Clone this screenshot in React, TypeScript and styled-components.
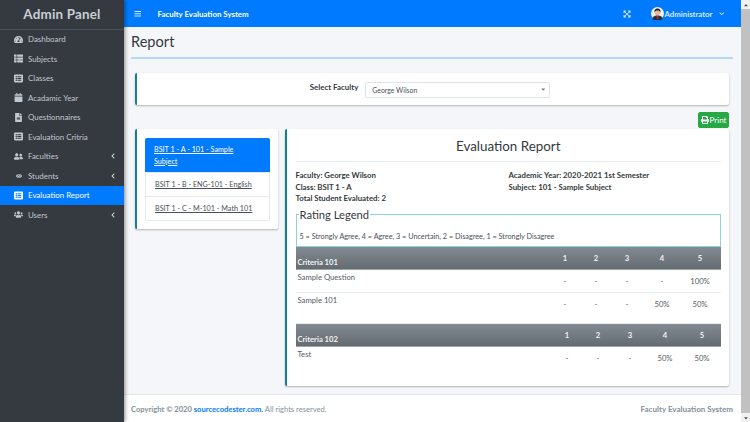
import React from "react";
import styled, { createGlobalStyle } from "styled-components";
import {
  FaTachometerAlt, FaThList, FaListAlt, FaCalendar, FaFileAlt, FaUserFriends, FaUsers, FaEye,
  FaChevronLeft, FaChevronDown, FaBars, FaExpandArrowsAlt, FaPrint, FaCaretDown, FaCaretUp,
} from "react-icons/fa";

const FONT = `"Lato", "Noto Sans", sans-serif`;

const Global = createGlobalStyle`
  html, body { margin: 0; padding: 0; height: 422px; overflow: hidden; background: #f4f6f9; }
  body { font-family: ${FONT}; font-size: 8px; color: #212529; }
  * { box-sizing: border-box; }
`;

const Page = styled.div`display: flex; width: 750px; height: 422px; overflow: hidden;`;

const Sidebar = styled.aside`
  width: 124px; flex: none; background: #343a40; color: #c2c7d0;
  box-shadow: 1px 0 4px rgba(0,0,0,.45); z-index: 2;
`;
const Brand = styled.div`
  height: 29.5px; display: flex; align-items: center; justify-content: center;
  font-size: 13.4px; font-weight: 700; letter-spacing: .2px; color: #c9ced5; border-bottom: 1px solid #4b545c;
`;
const Nav = styled.nav`display: flex; flex-direction: column;`;
const NavItem = styled.div<{ $active?: boolean }>`
  height: 19.5px; display: flex; align-items: center; padding: 0 8px 0 13px; gap: 4px;
  font-size: 7.9px; color: ${(p) => (p.$active ? "#ffffff" : "#c2c7d0")};
  background: ${(p) => (p.$active ? "#007bff" : "transparent")};
`;
const NavIcon = styled.span<{ $small?: boolean }>`
  width: 11px; display: flex; justify-content: center;
  svg { width: auto; height: ${(p) => (p.$small ? 6 : 9)}px; }
`;
const NavLabel = styled.span`flex: 1; white-space: nowrap;`;
const NavArrow = styled(FaChevronLeft)`font-size: 6px; color: #d5d9de;`;

const Main = styled.div`flex: 1; min-width: 0; display: flex; flex-direction: column; height: 422px;`;
const Topbar = styled.header`
  height: 27px; flex: none; background: #007bff; color: #fff; display: flex; align-items: center; padding: 0 17px 0 10px;
`;
const Burger = styled(FaBars)`font-size: 7.5px; color: #dbeaff;`;
const SysTitle = styled.div`margin-left: 16px; font-size: 7.9px; font-weight: 700; flex: 1; white-space: nowrap;`;
const FullIcon = styled(FaExpandArrowsAlt)`font-size: 8px; color: #d6e8ff; margin-right: 20px;`;
const Avatar = styled.svg`width: 13px; height: 13px; flex: none; margin-right: 1px;`;
const UserName = styled.span`font-size: 7.8px; font-weight: 700; color: #d6e8ff;`;
const UserCaret = styled(FaChevronDown)`font-size: 5.5px; color: #d6e8ff; margin-left: 6px;`;

const Content = styled.main`flex: 1; min-height: 0; padding: 0 8px 0 7px; display: flex; flex-direction: column;`;
const PageHead = styled.div`
  height: 32px; flex: none; border-bottom: 2px solid #b3d7ff; padding: 5px 0 0;
  font-size: 14.6px; line-height: 19px; color: #343a40;
`;
const Body = styled.div`padding: 14px 4px 0; display: flex; flex-direction: column;`;
const Card = styled.section`
  background: #fff; border-left: 2.5px solid #17808f; border-radius: 2px;
  box-shadow: 0 1px 2px rgba(0,0,0,.28);
`;
const FilterCard = styled(Card)`
  height: 32px; display: flex; align-items: center; justify-content: center; gap: 7px; padding-right: 6px;
`;
const FilterLabel = styled.label`font-size: 7.9px; font-weight: 700; color: #343a40; padding-bottom: 4px;`;
const Select = styled.div`
  width: 185px; height: 16px; margin-top: 1px; border: 1px solid #dfe3e7; border-radius: 2px; display: flex; align-items: center;
  justify-content: space-between; padding: 0 3px 0 6px; font-size: 6.9px; color: #495057; background: #fff;
`;
const SelectCaret = styled(FaCaretDown)`font-size: 6.5px; color: #777;`;
const PrintRow = styled.div`display: flex; justify-content: flex-end; margin-top: 7px; height: 17px;`;
const PrintButton = styled.button`
  width: 31px; height: 16px; border: 1px solid #28a745; background: #28a745; color: #fff; border-radius: 2px; padding: 0;
  display: flex; align-items: center; justify-content: center; gap: 1px; font: 400 8px ${FONT};
`;
const Columns = styled.div`display: flex; align-items: flex-start; gap: 7px;`;
const SideCard = styled(Card)`width: 143px; flex: none; padding: 9px 8px 8px;`;
const ListGroup = styled.div`
  border: 1px solid #e6e8eb; border-radius: 2px; display: flex; flex-direction: column;
`;
const ListItem = styled.a<{ $active?: boolean }>`
  display: block; padding: 6px 9px 5px; font-size: 7.2px; line-height: 11.7px; text-decoration: underline;
  color: ${(p) => (p.$active ? "#fff" : "#495057")}; background: ${(p) => (p.$active ? "#007bff" : "#fff")};
  margin: ${(p) => (p.$active ? "-1px -1px 0" : "0")};
  border-radius: ${(p) => (p.$active ? "2px 2px 0 0" : "0")};
  & + & { border-top: 1px solid #e6e8eb; }
  min-height: 24px;
`;
const ActiveLine = styled.span`display: block; width: 90px;`;
const ReportCard = styled(Card)`flex: 1; min-width: 0; height: 257px; padding: 0 8px 0 8.5px;`;
const ReportTitle = styled.h2`
  margin: 0; height: 33px; border-bottom: 1px solid #e9ecef; text-align: center; font-size: 13.4px; font-weight: 400;
  line-height: 34px; color: #343a40;
`;
const Info = styled.div`
  display: grid; grid-template-columns: 213px 1fr; margin-top: 8px; font-size: 7.8px; font-weight: 700; line-height: 11.6px; color: #343a40;
`;
const Legend = styled.fieldset`
  margin: 3px 0 0; padding: 0 3px; height: 39px; border: 1px solid #8fd3da; border-radius: 0; min-width: 0;
  display: block; font-size: 7.27px; color: #495057;
`;
const LegendTitle = styled.legend`font-size: 11.2px; line-height: 13px; color: #343a40; padding: 0 1px; margin-left: -1px;`;
const LegendText = styled.div`margin-top: 11px; white-space: nowrap;`;
const Grid = styled.div<{ $cols: string }>`
  display: grid; grid-template-columns: ${(p) => p.$cols};
`;
const HeadRow = styled(Grid)`
  height: 23px; background: linear-gradient(#838a91, #646c72); color: #f2f3f4; font-weight: 700; font-size: 7.6px;
  border-bottom: 1px solid #9aa5ae;
`;
const HeadName = styled.div`align-self: end; padding: 0 0 2px 2px;`;
const HeadNum = styled.div`text-align: center; padding-top: 6px;`;
const Row = styled(Grid)<{ $h: number; $line?: boolean }>`
  height: ${(p) => p.$h}px; font-size: 7.7px; color: #555c63;
  border-bottom: ${(p) => (p.$line ? "1px solid #e9ecef" : "none")};
`;
const Question = styled.div`padding: 2px 0 0 2px;`;
const Val = styled.div`text-align: center; padding-top: 6px;`;

const Footer = styled.footer`
  height: 28px; flex: none; background: #fff; border-top: 1px solid #e3e6ea; display: flex; align-items: center;
  justify-content: space-between; padding: 0 8px 0 7px; font-size: 7.6px; color: #869099;
`;
const FooterStrong = styled.strong`font-weight: 700;`;
const FooterBrand = styled.strong`font-weight: 700; font-size: 8px;`;
const FooterLink = styled.span`font-weight: 700; color: #007bff;`;

const Scrollbar = styled.div`
  width: 9px; flex: none; background: #f1f1f1; display: flex; flex-direction: column; align-items: center; justify-content: space-between;
`;
const Thumb = styled.div`width: 100%; flex: 1; background: #c1c1c1; margin: 0;`;
const ScrollArrow = styled.div`height: 9px; font-size: 6px; color: #505050; display: flex; align-items: center;`;

const menu = [
  [FaTachometerAlt, "Dashboard"],
  [FaThList, "Subjects"],
  [FaListAlt, "Classes"],
  [FaCalendar, "Acadamic Year"],
  [FaFileAlt, "Questionnaires"],
  [FaListAlt, "Evaluation Critria"],
  [FaUserFriends, "Faculties", "arrow"],
  [FaEye, "Students", "arrow"],
  [FaListAlt, "Evaluation Report", "active"],
  [FaUsers, "Users", "arrow"],
] as const;

const cols1 = "1fr 36px 26px 36px 34px 42px";
const cols2 = "1fr 32px 30px 34px 36px 38px";

const Nums = () => <>{[1, 2, 3, 4, 5].map((n) => <HeadNum key={n}>{n}</HeadNum>)}</>;
const Vals = ({ v }: { v: string[] }) => <>{v.map((x, i) => <Val key={i}>{x}</Val>)}</>;

export default function App() {
  return (
    <Page>
      <Global />
      <Sidebar>
        <Brand>Admin Panel</Brand>
        <Nav>
          {menu.map(([Icon, label, flag]) => (
            <NavItem key={label} $active={flag === "active"}>
              <NavIcon $small={label === "Students"}><Icon /></NavIcon>
              <NavLabel>{label}</NavLabel>
              {flag === "arrow" && <NavArrow />}
            </NavItem>
          ))}
        </Nav>
      </Sidebar>
      <Main>
        <Topbar>
          <Burger />
          <SysTitle>Faculty Evaluation System</SysTitle>
          <FullIcon />
          <Avatar viewBox="0 0 26 26">
            <circle cx="13" cy="13" r="13" fill="#eef0f2" />
            <path d="M3 24c1-6 5-7 10-7s9 1 10 7a13 13 0 0 1-20 0z" fill="#27303f" />
            <path d="M11 17h4l-1 7h-2z" fill="#c0392b" />
            <circle cx="13" cy="11" r="5.5" fill="#e8b99a" />
            <path d="M7 11c-1-6 3-8 6-8s7 2 6 8c-1-3-3-4-6-4s-5 1-6 4z" fill="#1d1d22" />
          </Avatar>
          <UserName>Administrator</UserName>
          <UserCaret />
        </Topbar>
        <Content>
          <PageHead>Report</PageHead>
          <Body>
            <FilterCard>
              <FilterLabel>Select Faculty</FilterLabel>
              <Select>George Wilson<SelectCaret /></Select>
            </FilterCard>
            <PrintRow>
              <PrintButton><FaPrint />Print</PrintButton>
            </PrintRow>
            <Columns>
              <SideCard>
                <ListGroup>
                  <ListItem $active><ActiveLine>BSIT 1 - A - 101 - Sample Subject</ActiveLine></ListItem>
                  <ListItem>BSIT 1 - B - ENG-101 - English</ListItem>
                  <ListItem>BSIT 1 - C - M-101 - Math 101</ListItem>
                </ListGroup>
              </SideCard>
              <ReportCard>
                <ReportTitle>Evaluation Report</ReportTitle>
                <Info>
                  <div>Faculty: George Wilson</div>
                  <div>Academic Year: 2020-2021 1st Semester</div>
                  <div>Class: BSIT 1 - A</div>
                  <div>Subject: 101 - Sample Subject</div>
                  <div>Total Student Evaluated: 2</div>
                </Info>
                <Legend>
                  <LegendTitle>Rating Legend</LegendTitle>
                  <LegendText>5 = Strongly Agree, 4 = Agree, 3 = Uncertain, 2 = Disagree, 1 = Strongly Disagree</LegendText>
                </Legend>
                <HeadRow $cols={cols1}><HeadName>Criteria 101</HeadName><Nums /></HeadRow>
                <Row $cols={cols1} $h={23} $line><Question>Sample Question</Question><Vals v={["-", "-", "-", "-", "100%"]} /></Row>
                <Row $cols={cols1} $h={31} $line><Question>Sample 101</Question><Vals v={["-", "-", "-", "50%", "50%"]} /></Row>
                <HeadRow $cols={cols2}><HeadName>Criteria 102</HeadName><Nums /></HeadRow>
                <Row $cols={cols2} $h={30}><Question>Test</Question><Vals v={["-", "-", "-", "50%", "50%"]} /></Row>
              </ReportCard>
            </Columns>
          </Body>
        </Content>
        <Footer>
          <span><FooterStrong>Copyright © 2020 </FooterStrong><FooterLink>sourcecodester.com.</FooterLink> All rights reserved.</span>
          <FooterBrand>Faculty Evaluation System</FooterBrand>
        </Footer>
      </Main>
      <Scrollbar>
        <ScrollArrow><FaCaretUp /></ScrollArrow>
        <Thumb />
        <ScrollArrow><FaCaretDown /></ScrollArrow>
      </Scrollbar>
    </Page>
  );
}
